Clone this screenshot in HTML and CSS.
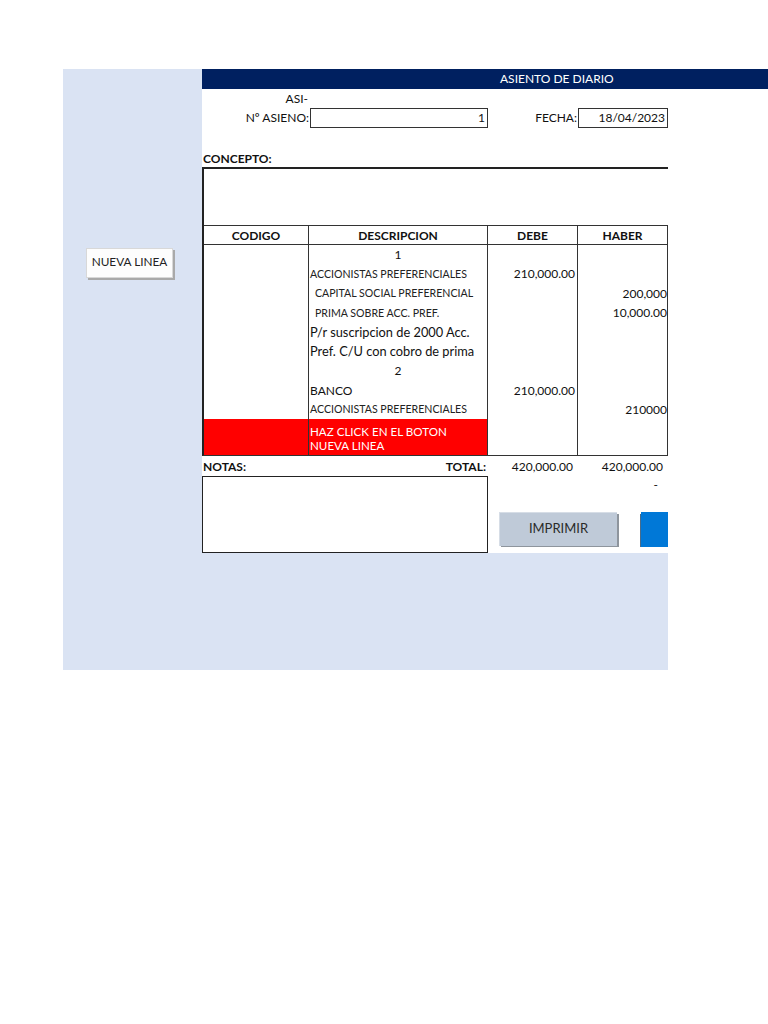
FILE: index.html
```html
<!DOCTYPE html>
<html lang="es">
<head>
<meta charset="utf-8">
<title>Asiento de Diario</title>
<link rel="stylesheet" href="styles.css">
</head>
<body>
<div class="sheet">
  <aside class="side">
    <div class="btn-nueva">NUEVA LINEA</div>
  </aside>
  <main class="form">
    <div class="title-bar"><span>ASIENTO DE DIARIO</span></div>
    <div class="form-body">
      <div class="row r-asi">
        <div class="cell right">ASI-</div>
      </div>
      <div class="row r-num">
        <div class="cell right">Nº ASIENO:</div>
        <div class="cell box right">1</div>
        <div class="cell right">FECHA:</div>
        <div class="cell box right">18/04/2023</div>
      </div>
      <div class="row r-empty"></div>
      <div class="row r-label">
        <div class="cell bold">CONCEPTO:</div>
      </div>
      <div class="concept-box"></div>

      <div class="table">
        <div class="trow thead">
          <div class="tc bold center">CODIGO</div>
          <div class="tc bold center">DESCRIPCION</div>
          <div class="tc bold center">DEBE</div>
          <div class="tc bold center">HABER</div>
        </div>
        <div class="trow">
          <div class="tc"></div>
          <div class="tc center">1</div>
          <div class="tc"></div>
          <div class="tc"></div>
        </div>
        <div class="trow">
          <div class="tc"></div>
          <div class="tc small">ACCIONISTAS PREFERENCIALES</div>
          <div class="tc right num up">210,000.00</div>
          <div class="tc"></div>
        </div>
        <div class="trow">
          <div class="tc"></div>
          <div class="tc small indent">CAPITAL SOCIAL PREFERENCIAL</div>
          <div class="tc"></div>
          <div class="tc right num tight">200,000</div>
        </div>
        <div class="trow">
          <div class="tc"></div>
          <div class="tc small indent">PRIMA SOBRE ACC. PREF.</div>
          <div class="tc"></div>
          <div class="tc right num tight">10,000.00</div>
        </div>
        <div class="trow">
          <div class="tc"></div>
          <div class="tc large">P/r suscripcion de 2000 Acc.</div>
          <div class="tc"></div>
          <div class="tc"></div>
        </div>
        <div class="trow">
          <div class="tc"></div>
          <div class="tc large">Pref. C/U con cobro de prima</div>
          <div class="tc"></div>
          <div class="tc"></div>
        </div>
        <div class="trow">
          <div class="tc"></div>
          <div class="tc center">2</div>
          <div class="tc"></div>
          <div class="tc"></div>
        </div>
        <div class="trow">
          <div class="tc"></div>
          <div class="tc">BANCO</div>
          <div class="tc right num">210,000.00</div>
          <div class="tc"></div>
        </div>
        <div class="trow">
          <div class="tc"></div>
          <div class="tc small">ACCIONISTAS PREFERENCIALES</div>
          <div class="tc"></div>
          <div class="tc right num tight">210000</div>
        </div>
        <div class="trow red-row">
          <div class="tc red"></div>
          <div class="tc red warn">HAZ CLICK EN EL BOTON<br>NUEVA LINEA</div>
          <div class="tc"></div>
          <div class="tc"></div>
        </div>
      </div>

      <div class="row r-total">
        <div class="cell bold">NOTAS:</div>
        <div class="cell bold right">TOTAL:</div>
        <div class="cell right num">420,000.00</div>
        <div class="cell right num">420,000.00</div>
      </div>

      <div class="notes-row">
        <div class="notes-box"></div>
        <div class="actions">
          <div class="dash">-</div>
          <div class="btns">
            <div class="btn-print">IMPRIMIR</div>
            <div class="btn-blue"></div>
          </div>
        </div>
      </div>
    </div>
  </main>
</div>
</body>
</html>
```

FILE: styles.css
```css
* {
  box-sizing: border-box;
}

html, body {
  margin: 0;
  padding: 0;
  background: #ffffff;
}

body {
  font-family: Lato, "Liberation Sans", sans-serif;
  font-size: 12px;
  color: #111;
  width: 768px;
  height: 1024px;
  overflow: hidden;
}

.sheet {
  margin: 69px 0 0 63px;
  width: 605px;
  height: 601px;
  background: #dae3f3;
  display: flex;
}

.side {
  width: 139px;
  flex: none;
  padding: 179px 0 0 23px;
}

.btn-nueva {
  width: 87px;
  height: 30px;
  background: #fdfdfd;
  border: 1px solid #d8d8d8;
  box-shadow: 2px 2px 0 #a9a9a9;
  display: flex;
  align-items: center;
  justify-content: center;
  padding-bottom: 3px;
  font-size: 11.8px;
  color: #222;
}

.form {
  width: 466px;
  flex: none;
  display: flex;
  flex-direction: column;
}

.title-bar {
  width: 566px;
  height: 20px;
  background: #002060;
  color: #ffffff;
  font-size: 12px;
  line-height: 20px;
  padding-left: 298px;
}

.form-body {
  background: #ffffff;
  height: 464px;
  display: flex;
  flex-direction: column;
}

.row {
  display: grid;
  grid-template-columns: 107px 179px 90px 90px;
  align-items: center;
}

.r-asi { height: 19px; }
.r-num { height: 20px; }
.r-empty { height: 20px; }
.r-label { height: 19px; }
.r-total { height: 20px; }

.cell {
  padding: 0 1px;
  white-space: nowrap;
}

.r-label .cell {
  padding-left: 1px;
  padding-top: 2px;
}

.box {
  height: 20px;
  border: 1px solid #333;
  line-height: 18px;
  padding: 0 2px;
}

.r-num .box:nth-child(2) {
  margin-left: 1px;
}

.r-num .cell:first-child {
  padding-right: 0;
}

.right { text-align: right; }
.center { text-align: center; }
.bold { font-weight: 700; }

.concept-box {
  height: 59px;
  border-top: 2px solid #222;
  border-left: 2px solid #222;
  width: 466px;
}

.table {
  border-left: 2px solid #222;
  border-right: 1px solid #333;
  border-bottom: 1px solid #333;
}

.trow {
  display: grid;
  grid-template-columns: 105px 179px 90px 89px;
  height: 19.33px;
}

.thead {
  height: 20px;
  border-top: 1px solid #333;
  border-bottom: 1px solid #333;
}

.tc {
  border-right: 1px solid #333;
  white-space: nowrap;
  overflow: hidden;
  display: flex;
  align-items: center;
  padding: 0 1px;
}

.tc:last-child {
  border-right: none;
}

.tc.center { justify-content: center; }
.tc.right { justify-content: flex-end; }

.small {
  font-size: 10.6px;
  color: #222;
}

.indent {
  padding-left: 6px;
}

.large {
  font-size: 12.8px;
}

.num {
  padding-right: 2px;
}

.num.tight {
  padding-right: 0;
}

.up {
  align-items: flex-start;
  padding-top: 1px;
}

.red-row {
  height: 36px;
}

.red {
  background: #ff0000;
}

.warn {
  color: #ffffff;
  font-size: 11.6px;
  line-height: 14px;
  align-items: flex-start;
  padding-top: 6px;
}

.r-total .cell:nth-child(2) {
  padding-right: 2px;
}

.r-total .cell:nth-child(3) {
  padding-right: 5px;
}

.r-total .cell:nth-child(4) {
  padding-right: 5px;
}

.notes-row {
  display: flex;
  height: 77px;
}

.notes-box {
  width: 286px;
  height: 77px;
  border: 1px solid #222;
}

.actions {
  width: 180px;
  display: flex;
  flex-direction: column;
}

.dash {
  height: 20px;
  text-align: right;
  padding-right: 10px;
  line-height: 18px;
}

.btns {
  display: flex;
  padding: 16px 0 0 11px;
  gap: 24px;
  overflow: hidden;
}

.btn-print {
  width: 118px;
  height: 34px;
  flex: none;
  background: #bfcad8;
  border-top: 1px solid #d6dde6;
  border-left: 1px solid #d6dde6;
  box-shadow: 2px 2px 0 #8e959d;
  display: flex;
  align-items: center;
  justify-content: center;
  padding-bottom: 3px;
  font-size: 13px;
  color: #2a2a2a;
}

.btn-blue {
  width: 27px;
  height: 35px;
  flex: none;
  background: #0078d7;
  box-shadow: -1px 2px 0 #4a6c8a;
}
```
